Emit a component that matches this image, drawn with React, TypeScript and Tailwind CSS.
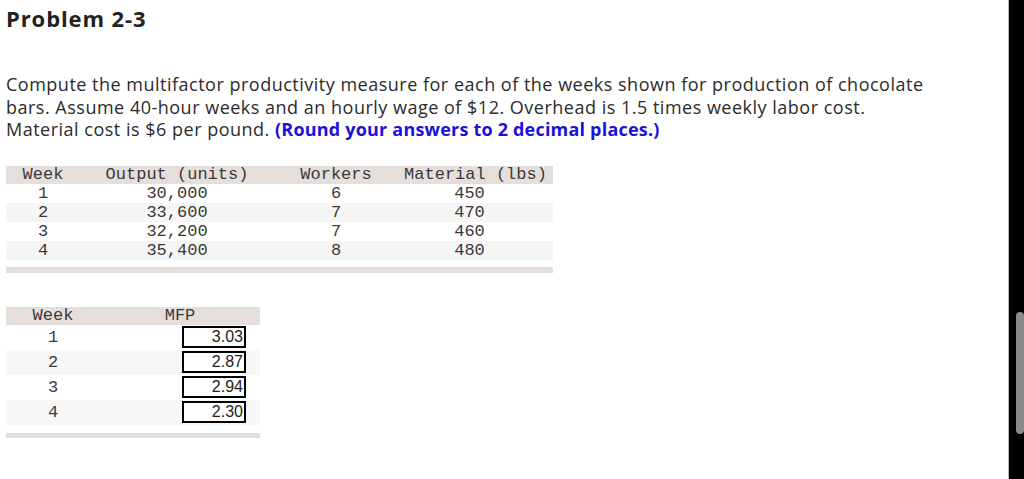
const inputRows = [
  { week: 1, output: '30,000', workers: 6, material: 450 },
  { week: 2, output: '33,600', workers: 7, material: 470 },
  { week: 3, output: '32,200', workers: 7, material: 460 },
  { week: 4, output: '35,400', workers: 8, material: 480 },
];

const mfpRows = [
  { week: 1, mfp: '3.03' },
  { week: 2, mfp: '2.87' },
  { week: 3, mfp: '2.94' },
  { week: 4, mfp: '2.30' },
];

const mono = "font-['Liberation_Mono',monospace] text-[17px] text-[#3a3a3a]";

export default function App() {
  return (
    <div className="flex h-[479px] w-[1024px] overflow-hidden bg-white">
      <div className="flex-1 px-[6px] font-['Open_Sans',sans-serif] text-[#2b2b2b]">
        <h1 className="pt-[3px] text-[22px] font-bold leading-[30px] tracking-[0.9px] text-[#222]">Problem 2-3</h1>

        <p className="mt-[40px] whitespace-nowrap text-[18px] leading-[22.5px] tracking-[0.5px]">
          Compute the multifactor productivity measure for each of the weeks shown for production of chocolate
          <br />
          bars. Assume 40-hour weeks and an hourly wage of $12. Overhead is 1.5 times weekly labor cost.
          <br />
          Material cost is $6 per pound.{' '}
          <span className="font-bold tracking-[0.2px] text-[#1a12d8]">(Round your answers to 2 decimal places.)</span>
        </p>

        {/* input data */}
        <div className={`mt-[25px] w-[547px] ${mono}`}>
          <div className="grid h-[18px] grid-cols-[74px_194px_124px_155px] items-center bg-[#e6dedb] leading-[18px]">
            <div className="text-center">Week</div>
            <div className="text-center">Output (units)</div>
            <div className="text-center">Workers</div>
            <div className="text-center">Material (lbs)</div>
          </div>
          {inputRows.map((r, i) => (
            <div
              key={r.week}
              className={`grid h-[19px] grid-cols-[74px_194px_124px_155px] items-center leading-[19px] ${
                i % 2 === 1 ? 'bg-[#f5f5f5]' : 'bg-white'
              }`}
            >
              <div className="text-center">{r.week}</div>
              <div className="text-center">{r.output}</div>
              <div className="text-center">{r.workers}</div>
              <div className="pr-[12px] text-center">{r.material}</div>
            </div>
          ))}
          <div className="mt-[7px] h-[6px] bg-[#e6dedb]" />
        </div>

        {/* answers */}
        <div className={`mt-[34px] w-[254px] ${mono} text-[16px]`}>
          <div className="grid h-[18px] grid-cols-[94px_160px] items-center bg-[#e6dedb] leading-[18px]">
            <div className="text-center">Week</div>
            <div className="text-center">MFP</div>
          </div>
          {mfpRows.map((r, i) => (
            <div
              key={r.week}
              className={`grid h-[25px] grid-cols-[94px_160px] items-center ${
                i % 2 === 1 ? 'bg-[#f7f7f7]' : 'bg-white'
              }`}
            >
              <div className="text-center">{r.week}</div>
              <div className="flex justify-end pr-[14px]">
                <div className="h-[22px] w-[64px] border-2 border-black bg-white pr-[1px] text-right font-['Liberation_Sans',sans-serif] text-[16px] leading-[18px] text-[#222]">
                  {r.mfp}
                </div>
              </div>
            </div>
          ))}
          <div className="mt-[8px] h-[5px] bg-[#e6dedb]" />
        </div>
      </div>

      {/* window edge / scrollbar */}
      <div className="h-full w-[16px] border-l border-[#bbb] bg-black pt-[312px]">
        <div className="ml-auto h-[122px] w-[8px] rounded-full bg-[#8a8a8a]" />
      </div>
    </div>
  );
}
